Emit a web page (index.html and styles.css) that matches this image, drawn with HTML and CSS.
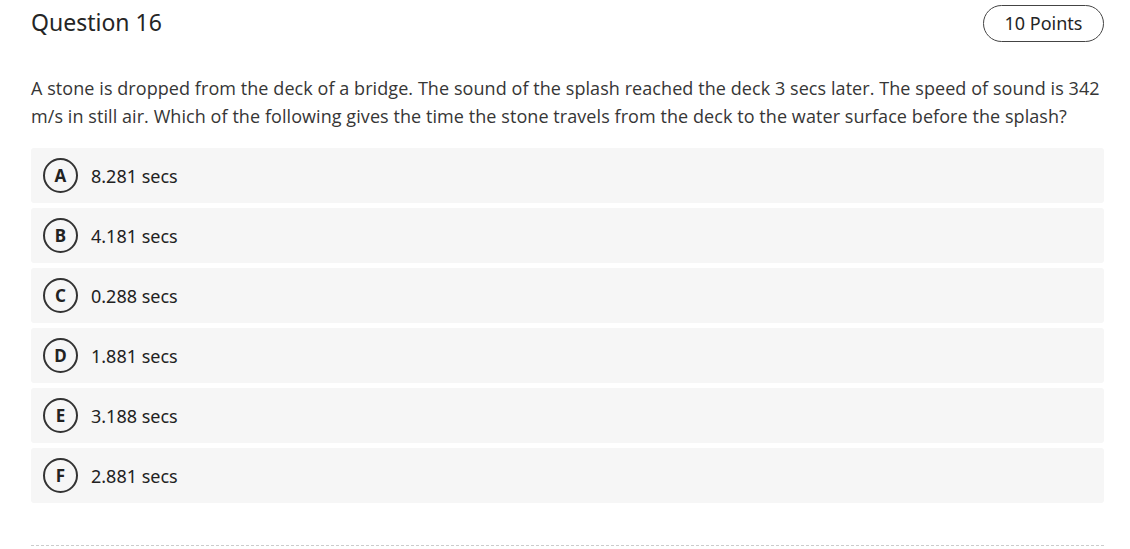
FILE: index.html
```html
<!DOCTYPE html>
<html>
<head>
<meta charset="utf-8">
<link rel="stylesheet" href="styles.css">
</head>
<body>
<div class="page">
  <div class="header">
    <h1 class="title">Question 16</h1>
    <div class="points">10 Points</div>
  </div>
  <p class="question">A stone is dropped from the deck of a bridge. The sound of the splash reached the deck 3 secs later. The speed of sound is 342 m/s in still air. Which of the following gives the time the stone travels from the deck to the water surface before the splash?</p>
  <div class="options">
    <div class="option"><span class="letter">A</span><span class="text">8.281 secs</span></div>
    <div class="option"><span class="letter">B</span><span class="text">4.181 secs</span></div>
    <div class="option"><span class="letter">C</span><span class="text">0.288 secs</span></div>
    <div class="option"><span class="letter">D</span><span class="text">1.881 secs</span></div>
    <div class="option"><span class="letter">E</span><span class="text">3.188 secs</span></div>
    <div class="option"><span class="letter">F</span><span class="text">2.881 secs</span></div>
  </div>
  <div class="divider"></div>
</div>
</body>
</html>
```

FILE: styles.css
```css
html, body {
  margin: 0;
  padding: 0;
  background: #fff;
}
body {
  font-family: "Open Sans", "Noto Sans", sans-serif;
  color: #333;
}
.page {
  padding: 5px 26px 0 31px;
}
.header {
  display: flex;
  justify-content: space-between;
  align-items: flex-start;
}
.title {
  margin: 1px 0 0 0;
  font-family: "Noto Sans", "Open Sans", sans-serif;
  font-weight: 400;
  font-size: 23px;
  line-height: 32px;
  color: #252525;
}
.points {
  box-sizing: border-box;
  height: 37px;
  width: 121px;
  text-align: center;
  border: 1px solid #444;
  border-radius: 19px;
  font-family: "Noto Sans", sans-serif;
  font-size: 18px;
  line-height: 35px;
  color: #252525;
}
.question {
  margin: 32px 0 0 0;
  font-size: 18px;
  line-height: 28px;
  letter-spacing: 0.07px;
  color: #363636;
}
.options {
  margin-top: 18px;
  display: flex;
  flex-direction: column;
  gap: 5px;
}
.option {
  height: 55px;
  background: #f6f6f6;
  border-radius: 3px;
  display: flex;
  align-items: center;
  padding-left: 12px;
}
.letter {
  box-sizing: border-box;
  width: 35px;
  height: 35px;
  border: 2px solid #333;
  border-radius: 50%;
  display: flex;
  align-items: center;
  justify-content: center;
  font-family: "Noto Sans", sans-serif;
  font-weight: 700;
  font-size: 17px;
  color: #222;
}
.text {
  margin-left: 13px;
  font-family: "Noto Sans", sans-serif;
  font-size: 18px;
  color: #222;
}
.divider {
  margin-top: 42px;
  border-top: 1px dashed #ccc;
}
```
